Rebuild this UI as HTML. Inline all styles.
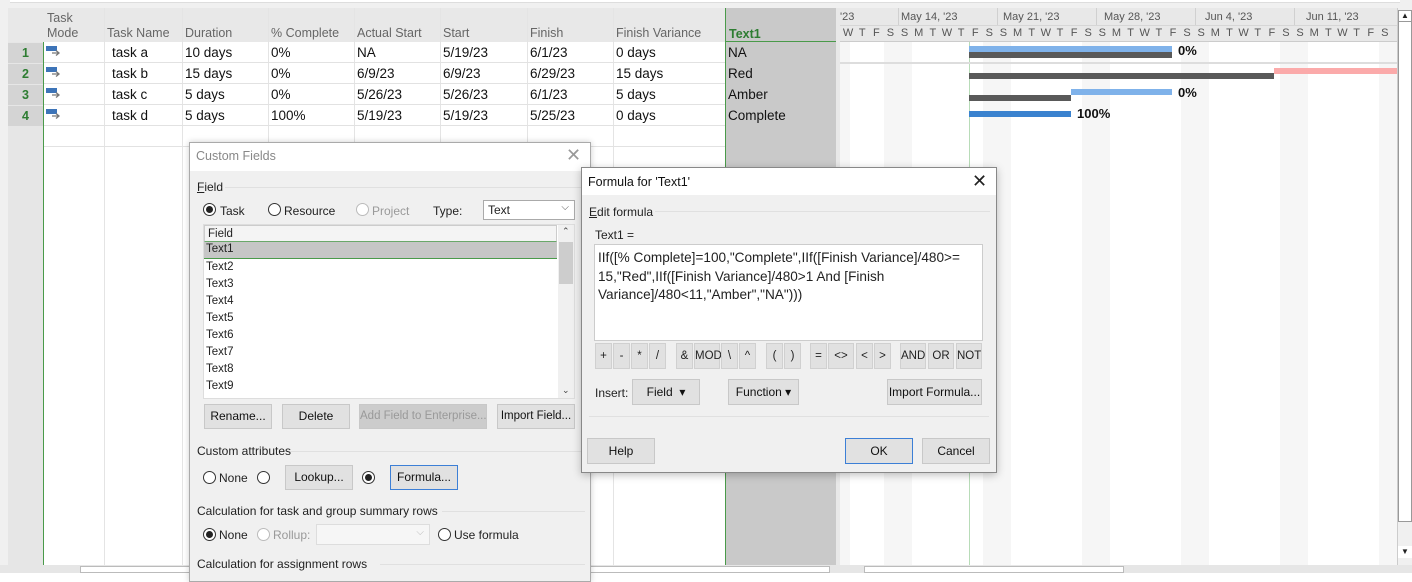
<!DOCTYPE html>
<html><head><meta charset="utf-8"><style>
*{box-sizing:border-box;margin:0;padding:0}
body{width:1412px;height:573px;overflow:hidden;background:#fff;font-family:"Liberation Sans",sans-serif;position:relative;font-size:13px;color:#222}
.a{position:absolute}
.hd{position:absolute;top:8px;height:34px;background:#e8e8e8;color:#666;font-size:12.5px}
.ht{position:absolute;bottom:2px;left:3px;white-space:nowrap}
.vl{position:absolute;top:8px;width:1px;height:557px;background:#e4e4e4}
.cell{position:absolute;font-size:13.5px;color:#111;white-space:nowrap}
.rn{position:absolute;left:8px;width:35px;height:20px;background:#d4d4d4;color:#2e7d32;font-weight:bold;text-align:center;font-size:12.5px;line-height:20px}
.btn{position:absolute;background:#e1e1e1;border:1px solid #c8c8c8;text-align:center;font-size:12px;color:#111;white-space:nowrap;overflow:hidden}
.rad{position:absolute;width:13px;height:13px;border:1px solid #333;border-radius:50%;background:#fff}
.rad.on::after{content:"";position:absolute;left:2px;top:2px;width:7px;height:7px;border-radius:50%;background:#222}
.rad.dis{border-color:#bbb}
.lbl{position:absolute;font-size:12px;color:#222;white-space:nowrap}
.sep{position:absolute;height:1px;background:#e0e0e0}
.fb{position:absolute;top:343px;height:26px;background:#e1e1e1;border:1px solid #d0d0d0;font-size:11.5px;text-align:center;line-height:24px;color:#222}
</style></head><body>
<div class="a" style="left:0;top:0;width:1412px;height:8px;background:#f0f0f0"></div>
<div class="a" style="left:10px;top:0;width:1390px;height:3px;background:#fff;border-bottom:1px solid #ddd"></div>
<div class="a" style="left:0;top:8px;width:8px;height:560px;background:#f0f0f0"></div>

<div class="hd" style="left:8px;width:832px"></div>
<div class="hd" style="left:44px;width:60px"><div class="ht" style="bottom:1px;line-height:15px">Task<br>Mode</div></div>
<div class="hd" style="left:104px;width:78px"><div class="ht">Task Name</div></div>
<div class="hd" style="left:182px;width:86px"><div class="ht">Duration</div></div>
<div class="hd" style="left:268px;width:86px"><div class="ht">% Complete</div></div>
<div class="hd" style="left:354px;width:86px"><div class="ht">Actual Start</div></div>
<div class="hd" style="left:440px;width:87px"><div class="ht">Start</div></div>
<div class="hd" style="left:527px;width:86px"><div class="ht">Finish</div></div>
<div class="hd" style="left:613px;width:112px"><div class="ht">Finish Variance</div></div>
<div class="a" style="left:725px;top:8px;width:111px;height:557px;background:#c9c9c9"></div>
<div class="a" style="left:725px;top:8px;width:1px;height:557px;background:#4a9a4a"></div>
<div class="a" style="left:729px;top:27px;font-size:12.5px;font-weight:bold;color:#2e7d32">Text1</div>
<div class="a" style="left:725px;top:41px;width:111px;height:1px;background:#4a9a4a"></div>
<div class="a" style="left:836px;top:8px;width:4px;height:557px;background:#e8e8e8"></div>

<div class="vl" style="left:104px"></div><div class="vl" style="left:182px"></div><div class="vl" style="left:268px"></div><div class="vl" style="left:354px"></div><div class="vl" style="left:440px"></div><div class="vl" style="left:527px"></div><div class="vl" style="left:613px"></div>
<div class="a" style="left:8px;top:42px;width:35px;height:523px;background:#e6e6e6"></div>
<div class="a" style="left:43px;top:42px;width:1px;height:523px;background:#4a9a4a"></div>
<div class="a" style="left:44px;top:62px;width:681px;height:1px;background:#e2e2e2"></div>
<div class="a" style="left:44px;top:83px;width:681px;height:1px;background:#e2e2e2"></div>
<div class="a" style="left:44px;top:104px;width:681px;height:1px;background:#e2e2e2"></div>
<div class="a" style="left:44px;top:125px;width:681px;height:1px;background:#e2e2e2"></div>
<div class="a" style="left:44px;top:146px;width:681px;height:1px;background:#e2e2e2"></div>

<div class="rn" style="top:43px">1</div><div class="rn" style="top:64px">2</div><div class="rn" style="top:85px">3</div><div class="rn" style="top:106px">4</div>
<svg class="a" style="left:46px;top:45px" width="16" height="80"><g id="ic"><rect x="0" y="1" width="11" height="5" fill="#3d74b8"/><path d="M6 8h7M10 5.5l3 2.5-3 2.5" stroke="#777" stroke-width="1.3" fill="none"/></g><use href="#ic" y="21"/><use href="#ic" y="42"/><use href="#ic" y="63"/></svg>
<div class="cell" style="left:112px;top:45px">task a</div><div class="cell" style="left:185px;top:45px">10 days</div><div class="cell" style="left:271px;top:45px">0%</div><div class="cell" style="left:357px;top:45px">NA</div><div class="cell" style="left:443px;top:45px">5/19/23</div><div class="cell" style="left:530px;top:45px">6/1/23</div><div class="cell" style="left:616px;top:45px">0 days</div><div class="cell" style="left:728px;top:45px">NA</div>
<div class="cell" style="left:112px;top:66px">task b</div><div class="cell" style="left:185px;top:66px">15 days</div><div class="cell" style="left:271px;top:66px">0%</div><div class="cell" style="left:357px;top:66px">6/9/23</div><div class="cell" style="left:443px;top:66px">6/9/23</div><div class="cell" style="left:530px;top:66px">6/29/23</div><div class="cell" style="left:616px;top:66px">15 days</div><div class="cell" style="left:728px;top:66px">Red</div>
<div class="cell" style="left:112px;top:87px">task c</div><div class="cell" style="left:185px;top:87px">5 days</div><div class="cell" style="left:271px;top:87px">0%</div><div class="cell" style="left:357px;top:87px">5/26/23</div><div class="cell" style="left:443px;top:87px">5/26/23</div><div class="cell" style="left:530px;top:87px">6/1/23</div><div class="cell" style="left:616px;top:87px">5 days</div><div class="cell" style="left:728px;top:87px">Amber</div>
<div class="cell" style="left:112px;top:108px">task d</div><div class="cell" style="left:185px;top:108px">5 days</div><div class="cell" style="left:271px;top:108px">100%</div><div class="cell" style="left:357px;top:108px">5/19/23</div><div class="cell" style="left:443px;top:108px">5/19/23</div><div class="cell" style="left:530px;top:108px">5/25/23</div><div class="cell" style="left:616px;top:108px">0 days</div><div class="cell" style="left:728px;top:108px">Complete</div>

<div class="a" style="left:840px;top:42px;width:557px;height:523px;background:repeating-linear-gradient(90deg,#f6f6f6 0 28px,#fff 28px 99px);background-position:44px 0"></div>
<div class="a" style="left:840px;top:8px;width:557px;height:34px;background:#e8e8e8;border-bottom:1px solid #ccc"></div>
<div class="a" style="left:840px;top:25px;width:557px;height:1px;background:#d6d6d6"></div>
<div class="a" style="left:898px;top:8px;width:1px;height:17px;background:#d0d0d0"></div><div class="a" style="left:997px;top:8px;width:1px;height:17px;background:#d0d0d0"></div><div class="a" style="left:1096px;top:8px;width:1px;height:17px;background:#d0d0d0"></div><div class="a" style="left:1195px;top:8px;width:1px;height:17px;background:#d0d0d0"></div><div class="a" style="left:1294px;top:8px;width:1px;height:17px;background:#d0d0d0"></div>
<div class="a" style="left:840px;top:11px;font-size:11px;color:#555">'23</div>
<div class="a" style="left:901px;top:11px;font-size:11px;color:#555">May 14, '23</div>
<div class="a" style="left:1003px;top:11px;font-size:11px;color:#555">May 21, '23</div>
<div class="a" style="left:1104px;top:11px;font-size:11px;color:#555">May 28, '23</div>
<div class="a" style="left:1205px;top:11px;font-size:11px;color:#555">Jun 4, '23</div>
<div class="a" style="left:1306px;top:11px;font-size:11px;color:#555">Jun 11, '23</div>
<div class="a" style="left:841px;top:27px;width:556px;height:14px;overflow:hidden;display:flex;font-size:11px;color:#555">
<span style="flex:0 0 14.14px;text-align:center">W</span><span style="flex:0 0 14.14px;text-align:center">T</span><span style="flex:0 0 14.14px;text-align:center">F</span><span style="flex:0 0 14.14px;text-align:center">S</span><span style="flex:0 0 14.14px;text-align:center">S</span><span style="flex:0 0 14.14px;text-align:center">M</span><span style="flex:0 0 14.14px;text-align:center">T</span><span style="flex:0 0 14.14px;text-align:center">W</span><span style="flex:0 0 14.14px;text-align:center">T</span><span style="flex:0 0 14.14px;text-align:center">F</span><span style="flex:0 0 14.14px;text-align:center">S</span><span style="flex:0 0 14.14px;text-align:center">S</span><span style="flex:0 0 14.14px;text-align:center">M</span><span style="flex:0 0 14.14px;text-align:center">T</span><span style="flex:0 0 14.14px;text-align:center">W</span><span style="flex:0 0 14.14px;text-align:center">T</span><span style="flex:0 0 14.14px;text-align:center">F</span><span style="flex:0 0 14.14px;text-align:center">S</span><span style="flex:0 0 14.14px;text-align:center">S</span><span style="flex:0 0 14.14px;text-align:center">M</span><span style="flex:0 0 14.14px;text-align:center">T</span><span style="flex:0 0 14.14px;text-align:center">W</span><span style="flex:0 0 14.14px;text-align:center">T</span><span style="flex:0 0 14.14px;text-align:center">F</span><span style="flex:0 0 14.14px;text-align:center">S</span><span style="flex:0 0 14.14px;text-align:center">S</span><span style="flex:0 0 14.14px;text-align:center">M</span><span style="flex:0 0 14.14px;text-align:center">T</span><span style="flex:0 0 14.14px;text-align:center">W</span><span style="flex:0 0 14.14px;text-align:center">T</span><span style="flex:0 0 14.14px;text-align:center">F</span><span style="flex:0 0 14.14px;text-align:center">S</span><span style="flex:0 0 14.14px;text-align:center">S</span><span style="flex:0 0 14.14px;text-align:center">M</span><span style="flex:0 0 14.14px;text-align:center">T</span><span style="flex:0 0 14.14px;text-align:center">W</span><span style="flex:0 0 14.14px;text-align:center">T</span><span style="flex:0 0 14.14px;text-align:center">F</span><span style="flex:0 0 14.14px;text-align:center">S</span>
</div>
<div class="a" style="left:969px;top:42px;width:1px;height:523px;background:#b8dcb8"></div>
<div class="a" style="left:840px;top:62px;width:557px;height:2px;background:#ddd"></div>
<div class="a" style="left:969px;top:46px;width:203px;height:6px;background:#7fb2ea"></div>
<div class="a" style="left:969px;top:52px;width:203px;height:6px;background:#595959"></div>
<div class="a" style="left:1178px;top:43px;font-size:13px;font-weight:bold;color:#111">0%</div>
<div class="a" style="left:969px;top:73px;width:305px;height:6px;background:#595959"></div>
<div class="a" style="left:1274px;top:68px;width:123px;height:6px;background:#fbaaaa"></div>
<div class="a" style="left:969px;top:95px;width:102px;height:6px;background:#595959"></div>
<div class="a" style="left:1071px;top:89px;width:101px;height:6px;background:#7fb2ea"></div>
<div class="a" style="left:1178px;top:85px;font-size:13px;font-weight:bold;color:#111">0%</div>
<div class="a" style="left:969px;top:111px;width:102px;height:6px;background:#3a82cf"></div>
<div class="a" style="left:1077px;top:106px;font-size:13px;font-weight:bold;color:#111">100%</div>

<div class="a" style="left:1397px;top:8px;width:15px;height:557px;background:#f0f0f0;border-left:1px solid #ccc"></div>
<div class="a" style="left:1398px;top:10px;width:14px;height:12px;background:#fff;border:1px solid #999;font-size:8px;text-align:center;line-height:10px">▲</div>
<div class="a" style="left:1398px;top:22px;width:14px;height:500px;background:#fff;border:1px solid #999;border-top:none"></div>
<div class="a" style="left:1398px;top:546px;width:14px;height:12px;background:#fff;font-size:8px;text-align:center;line-height:12px">▼</div>
<div class="a" style="left:0;top:565px;width:1412px;height:8px;background:#e6e6e6"></div>
<div class="a" style="left:80px;top:566px;width:750px;height:7px;background:#fff;border:1px solid #bbb"></div>
<div class="a" style="left:864px;top:566px;width:260px;height:7px;background:#fff;border:1px solid #bbb"></div>

<!-- Custom Fields dialog -->
<div class="a" style="left:189px;top:142px;width:402px;height:440px;background:#f0f0f0;border:1px solid #aaa;box-shadow:0 0 6px rgba(0,0,0,.2)"></div>
<div class="a" style="left:190px;top:143px;width:400px;height:28px;background:#fff"></div>
<div class="a" style="left:196px;top:149px;font-size:12.5px;color:#888">Custom Fields</div>
<div class="a" style="left:566px;top:145px;font-size:18px;color:#999">✕</div>
<div class="sep" style="left:225px;top:187px;width:360px"></div>
<div class="lbl" style="left:197px;top:180px"><u>F</u>ield</div>
<div class="rad on" style="left:203px;top:203px"></div><div class="lbl" style="left:220px;top:204px">Task</div>
<div class="rad" style="left:268px;top:203px"></div><div class="lbl" style="left:284px;top:204px">Resource</div>
<div class="rad dis" style="left:356px;top:203px"></div><div class="lbl" style="left:372px;top:204px;color:#999">Project</div>
<div class="lbl" style="left:433px;top:204px">Type:</div>
<div class="a" style="left:483px;top:200px;width:92px;height:20px;background:#fff;border:1px solid #aaa;font-size:12px;padding:2px 0 0 4px">Text<span style="position:absolute;right:5px;top:1px;color:#555;font-size:10px">⌵</span></div>
<div class="a" style="left:203px;top:224px;width:372px;height:175px;background:#fff;border:1px solid #ddd"></div>
<div class="a" style="left:204px;top:225px;width:353px;height:17px;background:#f4f4f4;border:1px solid #ccc;border-bottom:1px solid #6aa86a;font-size:11.5px;padding:2px 0 0 3px">Field</div>
<div class="a" style="left:204px;top:242px;width:353px;height:17px;background:#c6c6c6;border-bottom:1px solid #4a9a4a;font-size:11.5px;padding:1px 0 0 2px">Text1</div>
<div class="a" style="left:206px;top:259px;font-size:11.5px;line-height:17px">Text2<br>Text3<br>Text4<br>Text5<br>Text6<br>Text7<br>Text8<br>Text9</div>
<div class="a" style="left:558px;top:225px;width:16px;height:173px;background:#f0f0f0"></div>
<div class="a" style="left:559px;top:242px;width:14px;height:42px;background:#cdcdcd"></div>
<div class="a" style="left:562px;top:226px;font-size:9px;color:#444">⌃</div>
<div class="a" style="left:562px;top:385px;font-size:9px;color:#444">⌄</div>
<div class="btn" style="left:204px;top:404px;width:68px;height:25px;line-height:23px">Rename...</div>
<div class="btn" style="left:282px;top:404px;width:68px;height:25px;line-height:23px">Delete</div>
<div class="btn" style="left:359px;top:404px;width:128px;height:25px;line-height:23px;background:#ccc;color:#999;font-size:11.5px">Add Field to Enterprise...</div>
<div class="btn" style="left:497px;top:404px;width:78px;height:25px;line-height:23px;font-size:11.5px">Import Field...</div>
<div class="sep" style="left:285px;top:451px;width:300px"></div>
<div class="lbl" style="left:197px;top:444px">Custom attributes</div>
<div class="rad" style="left:203px;top:471px"></div><div class="lbl" style="left:219px;top:471px">None</div>
<div class="rad" style="left:257px;top:471px"></div>
<div class="btn" style="left:285px;top:465px;width:68px;height:25px;line-height:23px">Lookup...</div>
<div class="rad on" style="left:362px;top:471px"></div>
<div class="btn" style="left:390px;top:465px;width:68px;height:25px;line-height:23px;border-color:#3c7fd6">Formula...</div>
<div class="sep" style="left:420px;top:511px;width:165px"></div>
<div class="lbl" style="left:197px;top:504px;background:#f0f0f0;padding-right:4px">Calculation for task and group summary rows</div>
<div class="rad on" style="left:203px;top:528px"></div><div class="lbl" style="left:219px;top:528px">None</div>
<div class="rad dis" style="left:257px;top:528px"></div><div class="lbl" style="left:273px;top:528px;color:#999">Rollup:</div>
<div class="a" style="left:316px;top:524px;width:114px;height:21px;background:#f6f6f6;border:1px solid #ddd"><span style="position:absolute;right:5px;top:2px;color:#bbb;font-size:10px">⌵</span></div>
<div class="rad" style="left:438px;top:528px"></div><div class="lbl" style="left:454px;top:528px">Use formula</div>
<div class="sep" style="left:380px;top:564px;width:205px"></div>
<div class="lbl" style="left:197px;top:557px;background:#f0f0f0;padding-right:4px">Calculation for assignment rows</div>

<!-- Formula dialog -->
<div class="a" style="left:581px;top:167px;width:416px;height:306px;background:#f0f0f0;border:1px solid #888;box-shadow:0 2px 8px rgba(0,0,0,.25)"></div>
<div class="a" style="left:582px;top:168px;width:414px;height:27px;background:#fff"></div>
<div class="a" style="left:588px;top:175px;font-size:12.5px;color:#111">Formula for 'Text1'</div>
<div class="a" style="left:972px;top:171px;font-size:18px;color:#222">✕</div>
<div class="sep" style="left:655px;top:211px;width:335px"></div>
<div class="lbl" style="left:589px;top:205px"><u>E</u>dit formula</div>
<div class="lbl" style="left:595px;top:228px">Text1 =</div>
<div class="a" style="left:594px;top:244px;width:389px;height:97px;background:#fff;border:1px solid #ccc;padding:4px 3px;font-size:13.6px;line-height:18.7px;color:#222;white-space:nowrap">IIf([% Complete]=100,"Complete",IIf([Finish Variance]/480&gt;=<br>15,"Red",IIf([Finish Variance]/480&gt;1 And [Finish<br>Variance]/480&lt;11,"Amber","NA")))</div>
<div class="fb" style="left:595px;width:17px">+</div><div class="fb" style="left:613px;width:17px">-</div><div class="fb" style="left:631px;width:17px">*</div><div class="fb" style="left:649px;width:17px">/</div>
<div class="fb" style="left:676px;width:17px">&amp;</div><div class="fb" style="left:694px;width:26px">MOD</div><div class="fb" style="left:721px;width:17px">\</div><div class="fb" style="left:739px;width:17px">^</div>
<div class="fb" style="left:766px;width:17px">(</div><div class="fb" style="left:784px;width:17px">)</div>
<div class="fb" style="left:810px;width:17px">=</div><div class="fb" style="left:828px;width:26px">&lt;&gt;</div><div class="fb" style="left:856px;width:17px">&lt;</div><div class="fb" style="left:874px;width:17px">&gt;</div>
<div class="fb" style="left:900px;width:26px">AND</div><div class="fb" style="left:928px;width:26px">OR</div><div class="fb" style="left:956px;width:26px">NOT</div>
<div class="lbl" style="left:595px;top:386px">Insert:</div>
<div class="btn" style="left:632px;top:379px;width:68px;height:26px;line-height:24px">Field &nbsp;▾</div>
<div class="btn" style="left:728px;top:379px;width:71px;height:26px;line-height:24px">Function ▾</div>
<div class="btn" style="left:887px;top:379px;width:95px;height:26px;line-height:24px">Import Formula...</div>
<div class="sep" style="left:589px;top:416px;width:400px"></div>
<div class="btn" style="left:587px;top:438px;width:68px;height:26px;line-height:24px">Help</div>
<div class="btn" style="left:845px;top:438px;width:68px;height:26px;line-height:24px;border-color:#3c7fd6">OK</div>
<div class="btn" style="left:922px;top:438px;width:68px;height:26px;line-height:24px">Cancel</div>
</body></html>
